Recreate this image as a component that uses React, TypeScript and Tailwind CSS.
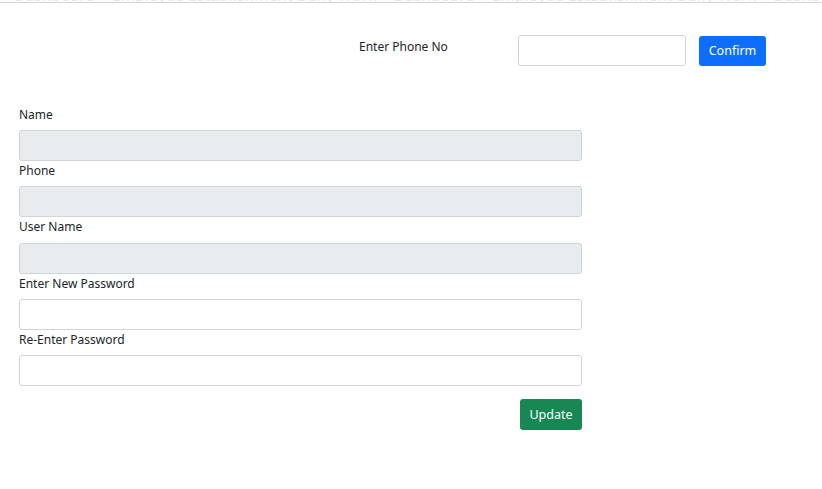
import React from 'react';

const fields = [
  { label: 'Name', disabled: true },
  { label: 'Phone', disabled: true },
  { label: 'User Name', disabled: true },
  { label: 'Enter New Password', disabled: false },
  { label: 'Re-Enter Password', disabled: false },
];

export default function App() {
  return (
    <div
      className="min-h-[489px] w-[822px] bg-white text-[12px] leading-[1.6] text-[#212529]"
      style={{ fontFamily: '"Noto Sans", "Open Sans", sans-serif' }}
    >
      {/* faint cut-off header strip */}
      <div className="relative h-[3px] overflow-hidden border-b border-[#d4d4d4]">
        <div className="-translate-y-[13px] whitespace-nowrap pl-[14px] text-[15px] leading-[16px] tracking-wide text-[#e6e6e6]">
          Dashboard &nbsp;&nbsp; Employee Establishment Daily Work &nbsp;&nbsp; Dashboard &nbsp;&nbsp; Employee Establishment Daily Work &nbsp;&nbsp; Dashboard &nbsp;&nbsp; Employee Establishment
        </div>
      </div>

      <div className="mt-[32px] flex items-start">
        <label className="ml-[359px] w-[159px] pt-[2px]">Enter Phone No</label>
        <input
          type="text"
          className="h-[31px] w-[168px] rounded-[3px] border border-[#ced4da] bg-white px-[9px] outline-none"
        />
        <button className="ml-[13px] mt-[1px] h-[30px] w-[67px] rounded-[3px] bg-[#0d6efd] text-[12.5px] text-white">
          Confirm
        </button>
      </div>

      <form className="ml-[19px] mt-[39px] flex w-[563px] flex-col">
        {fields.map((f) => (
          <div key={f.label} className="flex flex-col">
            <label className="mb-[6px] leading-[19.2px]">{f.label}</label>
            <input
              type={f.label.includes('Password') ? 'password' : 'text'}
              disabled={f.disabled}
              className={`h-[31px] w-full rounded-[3px] border px-[9px] outline-none ${
                f.disabled ? 'border-[#ced4da] bg-[#e9ecef]' : 'border-[#ced4da] bg-white'
              }`}
            />
          </div>
        ))}
        <div className="mt-[13px] flex justify-end">
          <button type="button" className="h-[31px] w-[62px] rounded-[3px] bg-[#198754] text-[12.5px] text-white">
            Update
          </button>
        </div>
      </form>
    </div>
  );
}
